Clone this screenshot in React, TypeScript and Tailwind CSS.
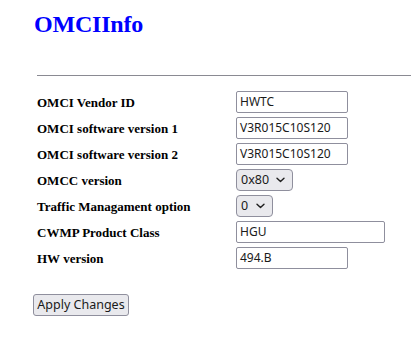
import React from "react";

const Chevron = () => (
  <svg width="9" height="6" viewBox="0 0 9 6" className="shrink-0">
    <path d="M1 1.2 L4.5 4.6 L8 1.2" fill="none" stroke="#1f1f1f" strokeWidth="1.4" strokeLinecap="round" strokeLinejoin="round" />
  </svg>
);

const TextBox = ({ value, w }: { value: string; w: string }) => (
  <div
    className={`${w} h-[22px] flex items-center border border-[#8f8f9d] rounded-[2px] bg-white pl-[3px] text-[12px] text-[#1a1a1a] leading-none`}
    style={{ fontFamily: '"Noto Sans", sans-serif' }}
  >
    {value}
  </div>
);

const SelectBox = ({ value, w }: { value: string; w: string }) => (
  <div
    className={`${w} h-[22px] flex items-center justify-between border border-[#8f8f9d] rounded-[4px] bg-[#e9e9ed] pl-[4px] pr-[7px] text-[12.5px] text-[#1a1a1a] leading-none`}
    style={{ fontFamily: '"Noto Sans", sans-serif' }}
  >
    <span>{value}</span>
    <Chevron />
  </div>
);

const Row = ({ label, children }: { label: string; children: React.ReactNode }) => (
  <div className="h-[26px] flex items-center">
    <div className="w-[199px] text-[13px] font-bold text-black leading-[15px]">{label}</div>
    {children}
  </div>
);

export default function App() {
  return (
    <div
      className="w-[411px] h-[343px] bg-white overflow-hidden pl-[37px]"
      style={{ fontFamily: '"Liberation Serif", serif' }}
    >
      <h2 className="-ml-[3px] mt-[10px] text-[24px] font-bold text-[#0000ff] leading-[28px] tracking-[-0.2px]">OMCIInfo</h2>
      <div className="mt-[37px] h-px bg-[#8a8a92] -mr-[10px]" />
      <div className="mt-[13px] flex flex-col">
        <Row label="OMCI Vendor ID">
          <TextBox value="HWTC" w="w-[112px]" />
        </Row>
        <Row label="OMCI software version 1">
          <TextBox value="V3R015C10S120" w="w-[112px]" />
        </Row>
        <Row label="OMCI software version 2">
          <TextBox value="V3R015C10S120" w="w-[112px]" />
        </Row>
        <Row label="OMCC version">
          <SelectBox value="0x80" w="w-[57px]" />
        </Row>
        <Row label="Traffic Managament option">
          <SelectBox value="0" w="w-[37px]" />
        </Row>
        <Row label="CWMP Product Class">
          <TextBox value="HGU" w="w-[149px]" />
        </Row>
        <Row label="HW version">
          <TextBox value="494.B" w="w-[112px]" />
        </Row>
      </div>
      <div className="mt-[21px] -ml-[4px]">
        <div
          className="inline-flex items-center justify-center w-[96px] h-[22px] border border-[#8f8f9d] rounded-[3px] bg-[#e9e9ed] text-[12.5px] text-[#1a1a1a] leading-none"
          style={{ fontFamily: '"Noto Sans", sans-serif' }}
        >
          Apply Changes
        </div>
      </div>
    </div>
  );
}
